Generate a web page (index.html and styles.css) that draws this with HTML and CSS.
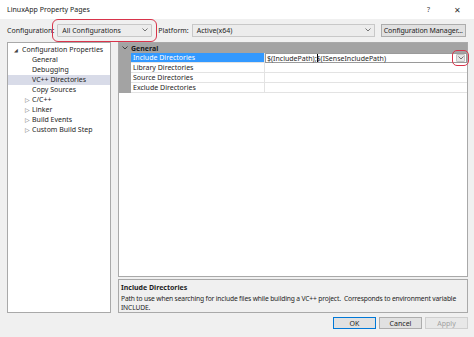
FILE: index.html
```html
<!DOCTYPE html>
<html>
<head>
    <meta charset="UTF-8">
    <link rel="stylesheet" href="styles.css">
</head>
<body>
<div class="titlebar">
    <span class="title">LinuxApp Property Pages</span>
    <span class="help">?</span>
    <span class="close">&#x2715;</span>
</div>
<div class="toolbar">
    <span class="label">Configuration:</span>
    <div class="combo combo-config marked">All Configurations<span class="arrow"><svg width="6" height="4" viewBox="0 0 6 4"><path d="M0.5 0.5L3 3L5.5 0.5" fill="none" stroke="#555" stroke-width="0.8"/></svg></span></div>
    <span class="label label-platform">Platform:</span>
    <div class="combo combo-platform">Active(x64)<span class="arrow"><svg width="6" height="4" viewBox="0 0 6 4"><path d="M0.5 0.5L3 3L5.5 0.5" fill="none" stroke="#555" stroke-width="0.8"/></svg></span></div>
    <div class="btn btn-manager">Configuration Manager...</div>
</div>
<div class="main">
    <div class="tree">
        <p class="node root"><span class="tw">&#x25E2;</span>Configuration Properties</p>
        <p class="node leaf">General</p>
        <p class="node leaf">Debugging</p>
        <p class="node leaf selected">VC++ Directories</p>
        <p class="node leaf">Copy Sources</p>
        <p class="node"><span class="tw tw-c">&#x25B7;</span>C/C++</p>
        <p class="node"><span class="tw tw-c">&#x25B7;</span>Linker</p>
        <p class="node"><span class="tw tw-c">&#x25B7;</span>Build Events</p>
        <p class="node"><span class="tw tw-c">&#x25B7;</span>Custom Build Step</p>
    </div>
    <div class="right">
        <div class="grid">
            <div class="grid-head"><span class="chev"><svg width="6" height="4" viewBox="0 0 6 4"><path d="M0.5 0.5L3 3L5.5 0.5" fill="none" stroke="#333" stroke-width="0.9"/></svg></span>General</div>
            <div class="row active">
                <span class="gutter"></span>
                <span class="name">Include Directories</span>
                <span class="value edit">$(IncludePath);<span class="caret"></span>$(ISenseIncludePath)<span class="drop marked"><svg width="6" height="4" viewBox="0 0 6 4"><path d="M0.5 0.5L3 3L5.5 0.5" fill="none" stroke="#555" stroke-width="0.8"/></svg></span></span>
            </div>
            <div class="row">
                <span class="gutter"></span>
                <span class="name">Library Directories</span>
                <span class="value"></span>
            </div>
            <div class="row">
                <span class="gutter"></span>
                <span class="name">Source Directories</span>
                <span class="value"></span>
            </div>
            <div class="row">
                <span class="gutter"></span>
                <span class="name">Exclude Directories</span>
                <span class="value"></span>
            </div>
        </div>
        <div class="desc">
            <p class="desc-title">Include Directories</p>
            <p class="desc-text">Path to use when searching for include files while building a VC++ project.&nbsp; Corresponds to environment variable<br>INCLUDE.</p>
        </div>
    </div>
</div>
<div class="footer">
    <div class="btn btn-ok">OK</div>
    <div class="btn">Cancel</div>
    <div class="btn disabled">Apply</div>
</div>
</body>
</html>
```

FILE: styles.css
```css
body,p,div,span{margin: 0;padding: 0;}
body{width: 474px;height: 337px;overflow: hidden;background: #f0f0f0;font-family: "Noto Sans", "Open Sans", sans-serif;font-size: 7px;color: #1e1e1e;}

.titlebar{display: flex;align-items: center;height: 19px;background: #fff;padding-left: 7px;}
.title{flex: 1;color: #222;}
.help{width: 27px;font-size: 7px;color: #444;}
.close{width: 20px;font-size: 8px;color: #333;}

.toolbar{display: flex;align-items: center;height: 22px;padding-left: 7px;}
.label{margin-right: 3px;}
.label-platform{margin-left: 6px;margin-right: 3px;}
.combo{display: flex;align-items: center;height: 13px;border: 1px solid #c8c8c8;background: #ececec;padding-left: 4px;box-sizing: border-box;}
.combo-config{width: 95px;}
.combo-platform{width: 183px;}
.arrow{margin-left: auto;width: 9px;display: flex;}
.marked{outline: 1.5px solid #d8344b;outline-offset: 3px;border-radius: 5px;}
.combo-config.marked{border-radius: 1px;outline-offset: 4px;}

.btn{display: flex;align-items: center;justify-content: center;height: 13px;border: 1px solid #adadad;background: #e1e1e1;box-sizing: border-box;white-space: nowrap;}
.btn-manager{width: 85px;margin-left: 6px;letter-spacing: -0.1px;}

.main{display: flex;gap: 7px;height: 271px;padding: 1px 6px 0 7px;}
.tree{flex: 0 0 104px;border: 1px solid #a9a9a9;background: #fff;box-sizing: border-box;padding-top: 2px;}
.node{height: 10px;line-height: 10px;padding-left: 24px;white-space: nowrap;}
.node.root{padding-left: 6px;}
.tw{display: inline-block;width: 8px;font-size: 5px;color: #444;}
.tw-c{margin-left: -7px;width: 7px;font-size: 6px;color: #666;}
.selected{background: #d8dbe8;}

.right{flex: 1;min-width: 0;display: flex;flex-direction: column;gap: 2px;}
.grid{height: 235px;border: 1px solid #a9a9a9;background: #fff;box-sizing: border-box;}
.grid-head{display: flex;align-items: center;height: 10px;background: #a3a3a3;font-weight: bold;color: #1a1a1a;}
.chev{display: flex;width: 12px;justify-content: center;}
.row{display: flex;height: 10px;line-height: 9px;}
.gutter{width: 12px;background: #a3a3a3;}
.name{width: 134px;padding-left: 2px;box-sizing: border-box;border-bottom: 1px solid #e3e3e3;border-right: 1px solid #e3e3e3;}
.value{flex: 1;padding-left: 2px;border-bottom: 1px solid #e3e3e3;}
.active .name{background: #3399ff;color: #fff;}
.value.edit{display: flex;align-items: center;border: 1px solid #9a9a9a;padding-left: 1px;}
.caret{display: inline-block;width: 1px;height: 8px;background: #000;margin: 0 -1px 0 0;}
.drop{display: flex;align-items: center;justify-content: center;margin-left: auto;margin-right: 1px;width: 9px;height: 8px;background: #e5e5e5;border: 1px solid #c4c4c4;box-sizing: border-box;}
.drop.marked{border-radius: 1px;outline-offset: 3px;}

.desc{height: 34px;border: 1px solid #a9a9a9;box-sizing: border-box;padding: 3px 2px;overflow: hidden;}
.desc-title{font-weight: bold;line-height: 9px;margin-bottom: 2px;}
.desc-text{line-height: 9px;white-space: nowrap;font-size: 6.7px;letter-spacing: -0.15px;}

.footer{display: flex;justify-content: flex-end;gap: 3px;padding: 4px 6px 0 0;}
.footer .btn{width: 43px;height: 12px;}
.footer .btn-ok{border-color: #0078d7;}
.disabled{color: #a0a0a0;border-color: #cfcfcf;background: #e8e8e8;}
```
